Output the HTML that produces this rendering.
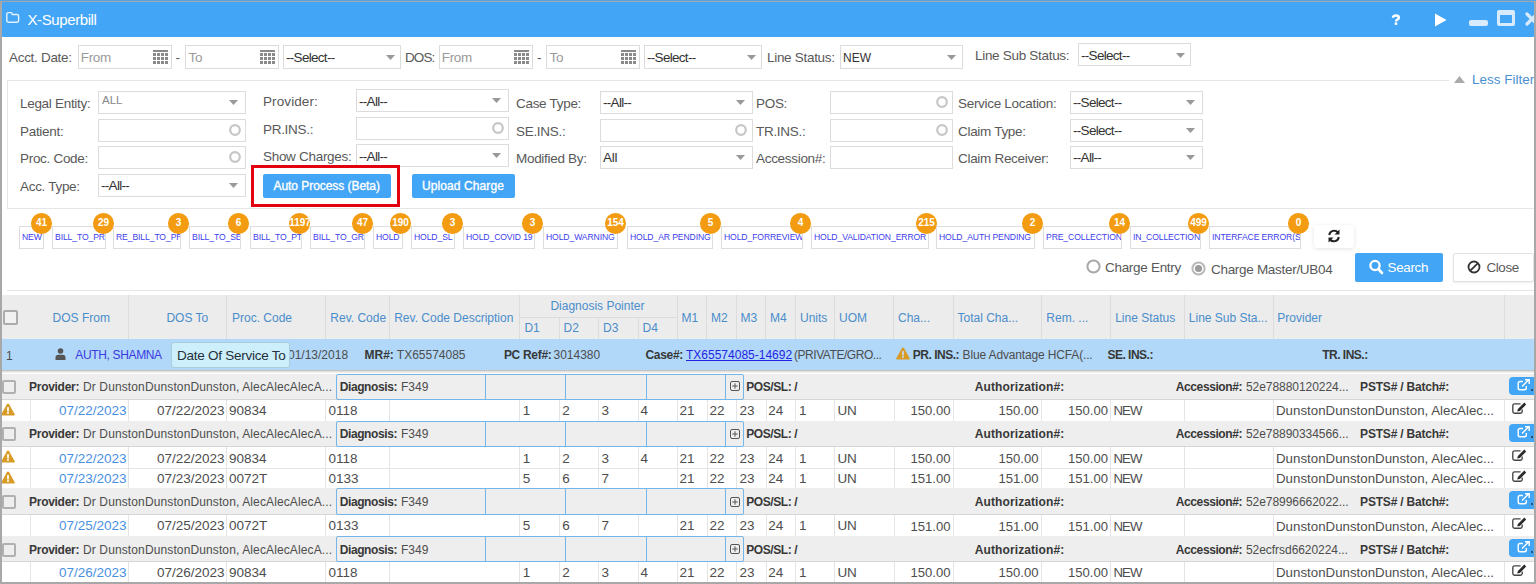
<!DOCTYPE html>
<html><head><meta charset="utf-8"><style>
html,body{margin:0;padding:0;width:1536px;height:584px;overflow:hidden;background:#fff}
body{position:relative;font-family:"Liberation Sans", sans-serif}
div,span,svg{position:absolute}
.t{white-space:nowrap;line-height:1;font-family:"Liberation Sans", sans-serif}
</style></head><body>
<div style="left:0px;top:0px;width:1536px;height:584px;background:#fff"></div>
<div style="left:0px;top:0px;width:1536px;height:1px;background:#52a3e6"></div>
<div style="left:0px;top:1px;width:1536px;height:1px;background:#a8a8a8"></div>
<div style="left:2px;top:2px;width:1532px;height:35px;background:#43a5f5"></div>
<svg style="position:absolute;left:0;top:0" width="24" height="28" viewBox="0 0 24 28"><path d="M6.8 14Q6.8 12.6 8.2 12.6H10.8Q11.6 12.6 12 13.4L12.4 14.4H17.2Q18.6 14.4 18.6 15.8V20.8Q18.6 22.2 17.2 22.2H8.2Q6.8 22.2 6.8 20.8Z" fill="none" stroke="#e2f1fd" stroke-width="1.45"/></svg>
<span class="t" style="left:27.5px;top:12.10px;font-size:15px;color:#fff;font-weight:400;letter-spacing:-0.4px">X-Superbill</span>
<svg style="position:absolute;left:1386px;top:10px" width="20" height="20" viewBox="1386 10 20 20"><path d="M1393 17.8Q1393 15.5 1396 15.5Q1398.8 15.5 1398.8 17.7Q1398.8 18.9 1397.4 19.6Q1396 20.3 1396 21.4" fill="none" stroke="#fff" stroke-width="2.5"/><rect x="1394.75" y="22.4" width="2.5" height="2.5" fill="#fff"/></svg>
<svg style="position:absolute;left:1434px;top:13px" width="13" height="14" viewBox="0 0 13 14"><path d="M1 0.5L12.5 7L1 13.5z" fill="#fff"/></svg>
<div style="left:1469px;top:20px;width:19px;height:6px;background:#d8ebfc;border-radius:2px"></div>
<div style="left:1497px;top:10.3px;width:18px;height:15.7px;box-sizing:border-box;border:3px solid #d8ebfc;border-top-width:5.3px;border-radius:2px"></div>
<svg style="position:absolute;left:1524.5px;top:12px" width="14" height="14" viewBox="0 0 14 14"><path d="M2 2L12 12M12 2L2 12" stroke="#d8ebfc" stroke-width="3.2" stroke-linecap="round"/></svg>
<span class="t" style="left:9px;top:51.07px;font-size:13.5px;color:#595959;font-weight:400;;letter-spacing:-0.3px">Acct. Date:</span>
<div style="left:78px;top:45px;width:94px;height:24px;box-sizing:border-box;border:1px solid #dcdcdc;background:#fff;"></div>
<span class="t" style="left:80.7px;top:50.57px;font-size:13.5px;color:#9a9a9a;font-weight:400;;letter-spacing:-0.3px">From</span>
<svg style="position:absolute;left:153px;top:50px" width="15" height="14" viewBox="0 0 15 14"><rect x="0" y="0" width="15" height="2" fill="#8a8a8a"/><rect x="0" y="3" width="3" height="3" fill="#8a8a8a"/><rect x="4" y="3" width="3" height="3" fill="#8a8a8a"/><rect x="8" y="3" width="3" height="3" fill="#8a8a8a"/><rect x="12" y="3" width="3" height="3" fill="#8a8a8a"/><rect x="0" y="7" width="3" height="3" fill="#8a8a8a"/><rect x="4" y="7" width="3" height="3" fill="#8a8a8a"/><rect x="8" y="7" width="3" height="3" fill="#8a8a8a"/><rect x="12" y="7" width="3" height="3" fill="#8a8a8a"/><rect x="0" y="11" width="3" height="3" fill="#8a8a8a"/><rect x="4" y="11" width="3" height="3" fill="#8a8a8a"/><rect x="8" y="11" width="3" height="3" fill="#8a8a8a"/><rect x="12" y="11" width="3" height="3" fill="#8a8a8a"/></svg>
<span class="t" style="left:175.5px;top:50.57px;font-size:13.5px;color:#595959;font-weight:400;;letter-spacing:-0.3px">-</span>
<div style="left:185px;top:45px;width:94px;height:24px;box-sizing:border-box;border:1px solid #dcdcdc;background:#fff;"></div>
<span class="t" style="left:188.5px;top:50.57px;font-size:13.5px;color:#9a9a9a;font-weight:400;;letter-spacing:-0.3px">To</span>
<svg style="position:absolute;left:260px;top:50px" width="15" height="14" viewBox="0 0 15 14"><rect x="0" y="0" width="15" height="2" fill="#8a8a8a"/><rect x="0" y="3" width="3" height="3" fill="#8a8a8a"/><rect x="4" y="3" width="3" height="3" fill="#8a8a8a"/><rect x="8" y="3" width="3" height="3" fill="#8a8a8a"/><rect x="12" y="3" width="3" height="3" fill="#8a8a8a"/><rect x="0" y="7" width="3" height="3" fill="#8a8a8a"/><rect x="4" y="7" width="3" height="3" fill="#8a8a8a"/><rect x="8" y="7" width="3" height="3" fill="#8a8a8a"/><rect x="12" y="7" width="3" height="3" fill="#8a8a8a"/><rect x="0" y="11" width="3" height="3" fill="#8a8a8a"/><rect x="4" y="11" width="3" height="3" fill="#8a8a8a"/><rect x="8" y="11" width="3" height="3" fill="#8a8a8a"/><rect x="12" y="11" width="3" height="3" fill="#8a8a8a"/></svg>
<div style="left:283px;top:45px;width:118px;height:24px;box-sizing:border-box;border:1px solid #dcdcdc;background:#fff;"></div>
<span class="t" style="left:286px;top:50.57px;font-size:13.5px;color:#333;font-weight:400;;letter-spacing:-0.7px">--Select--</span>
<svg style="position:absolute;left:386px;top:55px" width="9" height="5" viewBox="0 0 9 5"><path d="M0 0H9L4.5 5z" fill="#999"/></svg>
<span class="t" style="left:405px;top:51.07px;font-size:13.5px;color:#595959;font-weight:400;letter-spacing:-0.9px">DOS:</span>
<div style="left:439px;top:45px;width:94px;height:24px;box-sizing:border-box;border:1px solid #dcdcdc;background:#fff;"></div>
<span class="t" style="left:441.7px;top:50.57px;font-size:13.5px;color:#9a9a9a;font-weight:400;;letter-spacing:-0.3px">From</span>
<svg style="position:absolute;left:514px;top:50px" width="15" height="14" viewBox="0 0 15 14"><rect x="0" y="0" width="15" height="2" fill="#8a8a8a"/><rect x="0" y="3" width="3" height="3" fill="#8a8a8a"/><rect x="4" y="3" width="3" height="3" fill="#8a8a8a"/><rect x="8" y="3" width="3" height="3" fill="#8a8a8a"/><rect x="12" y="3" width="3" height="3" fill="#8a8a8a"/><rect x="0" y="7" width="3" height="3" fill="#8a8a8a"/><rect x="4" y="7" width="3" height="3" fill="#8a8a8a"/><rect x="8" y="7" width="3" height="3" fill="#8a8a8a"/><rect x="12" y="7" width="3" height="3" fill="#8a8a8a"/><rect x="0" y="11" width="3" height="3" fill="#8a8a8a"/><rect x="4" y="11" width="3" height="3" fill="#8a8a8a"/><rect x="8" y="11" width="3" height="3" fill="#8a8a8a"/><rect x="12" y="11" width="3" height="3" fill="#8a8a8a"/></svg>
<span class="t" style="left:537px;top:50.57px;font-size:13.5px;color:#595959;font-weight:400;;letter-spacing:-0.3px">-</span>
<div style="left:546px;top:45px;width:94px;height:24px;box-sizing:border-box;border:1px solid #dcdcdc;background:#fff;"></div>
<span class="t" style="left:549.5px;top:50.57px;font-size:13.5px;color:#9a9a9a;font-weight:400;;letter-spacing:-0.3px">To</span>
<svg style="position:absolute;left:621px;top:50px" width="15" height="14" viewBox="0 0 15 14"><rect x="0" y="0" width="15" height="2" fill="#8a8a8a"/><rect x="0" y="3" width="3" height="3" fill="#8a8a8a"/><rect x="4" y="3" width="3" height="3" fill="#8a8a8a"/><rect x="8" y="3" width="3" height="3" fill="#8a8a8a"/><rect x="12" y="3" width="3" height="3" fill="#8a8a8a"/><rect x="0" y="7" width="3" height="3" fill="#8a8a8a"/><rect x="4" y="7" width="3" height="3" fill="#8a8a8a"/><rect x="8" y="7" width="3" height="3" fill="#8a8a8a"/><rect x="12" y="7" width="3" height="3" fill="#8a8a8a"/><rect x="0" y="11" width="3" height="3" fill="#8a8a8a"/><rect x="4" y="11" width="3" height="3" fill="#8a8a8a"/><rect x="8" y="11" width="3" height="3" fill="#8a8a8a"/><rect x="12" y="11" width="3" height="3" fill="#8a8a8a"/></svg>
<div style="left:644px;top:45px;width:118px;height:24px;box-sizing:border-box;border:1px solid #dcdcdc;background:#fff;"></div>
<span class="t" style="left:647px;top:50.57px;font-size:13.5px;color:#333;font-weight:400;;letter-spacing:-0.7px">--Select--</span>
<svg style="position:absolute;left:747px;top:55px" width="9" height="5" viewBox="0 0 9 5"><path d="M0 0H9L4.5 5z" fill="#999"/></svg>
<span class="t" style="left:767px;top:51.07px;font-size:13.5px;color:#595959;font-weight:400;;letter-spacing:-0.3px">Line Status:</span>
<div style="left:840px;top:45px;width:123px;height:24px;box-sizing:border-box;border:1px solid #dcdcdc;background:#fff;"></div>
<span class="t" style="left:843px;top:51.84px;font-size:12px;color:#333;font-weight:400;">NEW</span>
<svg style="position:absolute;left:947px;top:55px" width="9" height="5" viewBox="0 0 9 5"><path d="M0 0H9L4.5 5z" fill="#999"/></svg>
<span class="t" style="left:975px;top:49.07px;font-size:13.5px;color:#595959;font-weight:400;;letter-spacing:-0.3px">Line Sub Status:</span>
<div style="left:1078px;top:43px;width:113px;height:23px;box-sizing:border-box;border:1px solid #dcdcdc;background:#fff;"></div>
<span class="t" style="left:1081px;top:48.57px;font-size:13.5px;color:#333;font-weight:400;;letter-spacing:-0.7px">--Select--</span>
<svg style="position:absolute;left:1176px;top:53px" width="9" height="5" viewBox="0 0 9 5"><path d="M0 0H9L4.5 5z" fill="#999"/></svg>
<div style="left:7px;top:80px;width:1442px;height:1px;background:#e6e6e6"></div>
<svg style="position:absolute;left:1454px;top:76px" width="11" height="7" viewBox="0 0 11 7"><path d="M0 7H11L5.5 0z" fill="#aaa"/></svg>
<span class="t" style="left:1472px;top:72.97px;font-size:13.5px;color:#4a90d0;font-weight:400;">Less Filter</span>
<div style="left:7px;top:80px;width:1px;height:129px;background:#e6e6e6"></div>
<div style="left:7px;top:208px;width:1527px;height:1px;background:#e6e6e6"></div>
<span class="t" style="left:20px;top:96.57px;font-size:13.5px;color:#595959;font-weight:400;;letter-spacing:-0.3px">Legal Entity:</span>
<div style="left:98px;top:91px;width:148px;height:23px;box-sizing:border-box;border:1px solid #dcdcdc;background:#fff;"></div>
<span class="t" style="left:102px;top:95.27px;font-size:11.5px;color:#888;font-weight:400;">ALL</span>
<svg style="position:absolute;left:229px;top:100px" width="9" height="5" viewBox="0 0 9 5"><path d="M0 0H9L4.5 5z" fill="#999"/></svg>
<span class="t" style="left:20px;top:124.57px;font-size:13.5px;color:#595959;font-weight:400;;letter-spacing:-0.3px">Patient:</span>
<div style="left:98px;top:119px;width:148px;height:23px;box-sizing:border-box;border:1px solid #dcdcdc;background:#fff;"></div>
<svg style="position:absolute;left:229px;top:124px" width="12" height="12" viewBox="0 0 12 12"><circle cx="6" cy="6" r="4.8" fill="none" stroke="#c6c6c6" stroke-width="2.2"/></svg>
<span class="t" style="left:20px;top:151.57px;font-size:13.5px;color:#595959;font-weight:400;;letter-spacing:-0.3px">Proc. Code:</span>
<div style="left:98px;top:146px;width:148px;height:23px;box-sizing:border-box;border:1px solid #dcdcdc;background:#fff;"></div>
<svg style="position:absolute;left:229px;top:151px" width="12" height="12" viewBox="0 0 12 12"><circle cx="6" cy="6" r="4.8" fill="none" stroke="#c6c6c6" stroke-width="2.2"/></svg>
<span class="t" style="left:20px;top:179.57px;font-size:13.5px;color:#595959;font-weight:400;;letter-spacing:-0.3px">Acc. Type:</span>
<div style="left:98px;top:174px;width:148px;height:23px;box-sizing:border-box;border:1px solid #dcdcdc;background:#fff;"></div>
<span class="t" style="left:101px;top:179.07px;font-size:13.5px;color:#333;font-weight:400;;letter-spacing:-0.7px">--All--</span>
<svg style="position:absolute;left:229px;top:183px" width="9" height="5" viewBox="0 0 9 5"><path d="M0 0H9L4.5 5z" fill="#999"/></svg>
<span class="t" style="left:263px;top:94.97px;font-size:13.5px;color:#595959;font-weight:400;letter-spacing:0.1px">Provider:</span>
<div style="left:356px;top:89px;width:153px;height:23px;box-sizing:border-box;border:1px solid #dcdcdc;background:#fff;"></div>
<span class="t" style="left:359px;top:94.57px;font-size:13.5px;color:#333;font-weight:400;;letter-spacing:-0.7px">--All--</span>
<svg style="position:absolute;left:492px;top:98px" width="9" height="5" viewBox="0 0 9 5"><path d="M0 0H9L4.5 5z" fill="#999"/></svg>
<span class="t" style="left:263px;top:122.57px;font-size:13.5px;color:#595959;font-weight:400;;letter-spacing:-0.3px">PR.INS.:</span>
<div style="left:356px;top:117px;width:153px;height:23px;box-sizing:border-box;border:1px solid #dcdcdc;background:#fff;"></div>
<svg style="position:absolute;left:492px;top:122px" width="12" height="12" viewBox="0 0 12 12"><circle cx="6" cy="6" r="4.8" fill="none" stroke="#c6c6c6" stroke-width="2.2"/></svg>
<span class="t" style="left:263px;top:150.07px;font-size:13.5px;color:#595959;font-weight:400;;letter-spacing:-0.3px">Show Charges:</span>
<div style="left:356px;top:144px;width:153px;height:23px;box-sizing:border-box;border:1px solid #dcdcdc;background:#fff;"></div>
<span class="t" style="left:359px;top:149.57px;font-size:13.5px;color:#333;font-weight:400;;letter-spacing:-0.7px">--All--</span>
<svg style="position:absolute;left:492px;top:153px" width="9" height="5" viewBox="0 0 9 5"><path d="M0 0H9L4.5 5z" fill="#999"/></svg>
<span class="t" style="left:516px;top:96.57px;font-size:13.5px;color:#595959;font-weight:400;;letter-spacing:-0.3px">Case Type:</span>
<div style="left:600px;top:91px;width:153px;height:23px;box-sizing:border-box;border:1px solid #dcdcdc;background:#fff;"></div>
<span class="t" style="left:603px;top:96.07px;font-size:13.5px;color:#333;font-weight:400;;letter-spacing:-0.7px">--All--</span>
<svg style="position:absolute;left:736px;top:100px" width="9" height="5" viewBox="0 0 9 5"><path d="M0 0H9L4.5 5z" fill="#999"/></svg>
<span class="t" style="left:516px;top:124.57px;font-size:13.5px;color:#595959;font-weight:400;;letter-spacing:-0.3px">SE.INS.:</span>
<div style="left:600px;top:119px;width:153px;height:23px;box-sizing:border-box;border:1px solid #dcdcdc;background:#fff;"></div>
<svg style="position:absolute;left:735px;top:124px" width="12" height="12" viewBox="0 0 12 12"><circle cx="6" cy="6" r="4.8" fill="none" stroke="#c6c6c6" stroke-width="2.2"/></svg>
<span class="t" style="left:516px;top:151.57px;font-size:13.5px;color:#595959;font-weight:400;;letter-spacing:-0.3px">Modified By:</span>
<div style="left:600px;top:146px;width:153px;height:23px;box-sizing:border-box;border:1px solid #dcdcdc;background:#fff;"></div>
<span class="t" style="left:603px;top:151.07px;font-size:13.5px;color:#333;font-weight:400;;letter-spacing:-0.3px">All</span>
<svg style="position:absolute;left:736px;top:155px" width="9" height="5" viewBox="0 0 9 5"><path d="M0 0H9L4.5 5z" fill="#999"/></svg>
<span class="t" style="left:756px;top:96.57px;font-size:13.5px;color:#595959;font-weight:400;;letter-spacing:-0.3px">POS:</span>
<div style="left:830px;top:91px;width:123px;height:23px;box-sizing:border-box;border:1px solid #dcdcdc;background:#fff;"></div>
<svg style="position:absolute;left:936px;top:96px" width="12" height="12" viewBox="0 0 12 12"><circle cx="6" cy="6" r="4.8" fill="none" stroke="#c6c6c6" stroke-width="2.2"/></svg>
<span class="t" style="left:756px;top:124.57px;font-size:13.5px;color:#595959;font-weight:400;;letter-spacing:-0.3px">TR.INS.:</span>
<div style="left:830px;top:119px;width:123px;height:23px;box-sizing:border-box;border:1px solid #dcdcdc;background:#fff;"></div>
<svg style="position:absolute;left:936px;top:124px" width="12" height="12" viewBox="0 0 12 12"><circle cx="6" cy="6" r="4.8" fill="none" stroke="#c6c6c6" stroke-width="2.2"/></svg>
<span class="t" style="left:756px;top:151.57px;font-size:13.5px;color:#595959;font-weight:400;;letter-spacing:-0.3px">Accession#:</span>
<div style="left:830px;top:146px;width:123px;height:23px;box-sizing:border-box;border:1px solid #dcdcdc;background:#fff;"></div>
<span class="t" style="left:958px;top:96.57px;font-size:13.5px;color:#595959;font-weight:400;;letter-spacing:-0.3px">Service Location:</span>
<div style="left:1070px;top:91px;width:133px;height:23px;box-sizing:border-box;border:1px solid #dcdcdc;background:#fff;"></div>
<span class="t" style="left:1073px;top:96.07px;font-size:13.5px;color:#333;font-weight:400;;letter-spacing:-0.7px">--Select--</span>
<svg style="position:absolute;left:1186px;top:100px" width="9" height="5" viewBox="0 0 9 5"><path d="M0 0H9L4.5 5z" fill="#999"/></svg>
<span class="t" style="left:958px;top:124.57px;font-size:13.5px;color:#595959;font-weight:400;;letter-spacing:-0.3px">Claim Type:</span>
<div style="left:1070px;top:119px;width:133px;height:23px;box-sizing:border-box;border:1px solid #dcdcdc;background:#fff;"></div>
<span class="t" style="left:1073px;top:124.07px;font-size:13.5px;color:#333;font-weight:400;;letter-spacing:-0.7px">--Select--</span>
<svg style="position:absolute;left:1186px;top:128px" width="9" height="5" viewBox="0 0 9 5"><path d="M0 0H9L4.5 5z" fill="#999"/></svg>
<span class="t" style="left:958px;top:151.57px;font-size:13.5px;color:#595959;font-weight:400;;letter-spacing:-0.3px">Claim Receiver:</span>
<div style="left:1070px;top:146px;width:133px;height:23px;box-sizing:border-box;border:1px solid #dcdcdc;background:#fff;"></div>
<span class="t" style="left:1073px;top:151.07px;font-size:13.5px;color:#333;font-weight:400;;letter-spacing:-0.7px">--All--</span>
<svg style="position:absolute;left:1186px;top:155px" width="9" height="5" viewBox="0 0 9 5"><path d="M0 0H9L4.5 5z" fill="#999"/></svg>
<div style="left:251px;top:165px;width:149px;height:42px;box-sizing:border-box;border:3px solid #e3000f"></div>
<div style="left:263px;top:174px;width:128px;height:24px;background:#43a5f5;border-radius:2px"></div>
<span class="t" style="left:273.5px;top:180.14px;font-size:12px;color:#fff;font-weight:400;-webkit-text-stroke:0.35px #fff;letter-spacing:-0.05px">Auto Process (Beta)</span>
<div style="left:412px;top:174px;width:103px;height:24px;background:#43a5f5;border-radius:2px"></div>
<span class="t" style="left:422px;top:180.14px;font-size:12px;color:#fff;font-weight:400;-webkit-text-stroke:0.35px #fff;letter-spacing:0.1px">Upload Charge</span>
<div style="left:19px;top:226px;width:25px;height:23px;box-sizing:border-box;border:1px solid #dddddd;overflow:hidden;background:#fff"><span class="t" style="left:2px;top:6px;font-size:8.6px;color:#4040ec;letter-spacing:-0.1px">NEW</span></div>
<div style="left:31.2px;top:213px;width:20.6px;height:20.6px;border-radius:50%;background:#f39c12;overflow:hidden"><span class="t" style="left:0;width:100%;text-align:center;top:4.5px;font-size:10px;color:#fff;font-weight:700;letter-spacing:0px">41</span></div>
<div style="left:52px;top:226px;width:54px;height:23px;box-sizing:border-box;border:1px solid #dddddd;overflow:hidden;background:#fff"><span class="t" style="left:2px;top:6px;font-size:8.6px;color:#4040ec;letter-spacing:-0.1px">BILL_TO_PR</span></div>
<div style="left:93.2px;top:213px;width:20.6px;height:20.6px;border-radius:50%;background:#f39c12;overflow:hidden"><span class="t" style="left:0;width:100%;text-align:center;top:4.5px;font-size:10px;color:#fff;font-weight:700;letter-spacing:0px">29</span></div>
<div style="left:113px;top:226px;width:68px;height:23px;box-sizing:border-box;border:1px solid #dddddd;overflow:hidden;background:#fff"><span class="t" style="left:2px;top:6px;font-size:8.6px;color:#4040ec;letter-spacing:-0.1px">RE_BILL_TO_PR</span></div>
<div style="left:168.2px;top:213px;width:20.6px;height:20.6px;border-radius:50%;background:#f39c12;overflow:hidden"><span class="t" style="left:0;width:100%;text-align:center;top:4.5px;font-size:10px;color:#fff;font-weight:700;letter-spacing:0px">3</span></div>
<div style="left:189px;top:226px;width:52px;height:23px;box-sizing:border-box;border:1px solid #dddddd;overflow:hidden;background:#fff"><span class="t" style="left:2px;top:6px;font-size:8.6px;color:#4040ec;letter-spacing:-0.1px">BILL_TO_SE</span></div>
<div style="left:228.2px;top:213px;width:20.6px;height:20.6px;border-radius:50%;background:#f39c12;overflow:hidden"><span class="t" style="left:0;width:100%;text-align:center;top:4.5px;font-size:10px;color:#fff;font-weight:700;letter-spacing:0px">6</span></div>
<div style="left:250px;top:226px;width:52px;height:23px;box-sizing:border-box;border:1px solid #dddddd;overflow:hidden;background:#fff"><span class="t" style="left:2px;top:6px;font-size:8.6px;color:#4040ec;letter-spacing:-0.1px">BILL_TO_PT</span></div>
<div style="left:289.2px;top:213px;width:20.6px;height:20.6px;border-radius:50%;background:#f39c12;overflow:hidden"><span class="t" style="left:0;width:100%;text-align:center;top:4.5px;font-size:10px;color:#fff;font-weight:700;letter-spacing:0px">1197</span></div>
<div style="left:310px;top:226px;width:55px;height:23px;box-sizing:border-box;border:1px solid #dddddd;overflow:hidden;background:#fff"><span class="t" style="left:2px;top:6px;font-size:8.6px;color:#4040ec;letter-spacing:-0.1px">BILL_TO_GR</span></div>
<div style="left:352.2px;top:213px;width:20.6px;height:20.6px;border-radius:50%;background:#f39c12;overflow:hidden"><span class="t" style="left:0;width:100%;text-align:center;top:4.5px;font-size:10px;color:#fff;font-weight:700;letter-spacing:0px">47</span></div>
<div style="left:373px;top:226px;width:30px;height:23px;box-sizing:border-box;border:1px solid #dddddd;overflow:hidden;background:#fff"><span class="t" style="left:2px;top:6px;font-size:8.6px;color:#4040ec;letter-spacing:-0.1px">HOLD</span></div>
<div style="left:390.2px;top:213px;width:20.6px;height:20.6px;border-radius:50%;background:#f39c12;overflow:hidden"><span class="t" style="left:0;width:100%;text-align:center;top:4.5px;font-size:10px;color:#fff;font-weight:700;letter-spacing:0px">190</span></div>
<div style="left:411px;top:226px;width:44px;height:23px;box-sizing:border-box;border:1px solid #dddddd;overflow:hidden;background:#fff"><span class="t" style="left:2px;top:6px;font-size:8.6px;color:#4040ec;letter-spacing:-0.1px">HOLD_SL</span></div>
<div style="left:442.2px;top:213px;width:20.6px;height:20.6px;border-radius:50%;background:#f39c12;overflow:hidden"><span class="t" style="left:0;width:100%;text-align:center;top:4.5px;font-size:10px;color:#fff;font-weight:700;letter-spacing:0px">3</span></div>
<div style="left:463px;top:226px;width:72px;height:23px;box-sizing:border-box;border:1px solid #dddddd;overflow:hidden;background:#fff"><span class="t" style="left:2px;top:6px;font-size:8.6px;color:#4040ec;letter-spacing:-0.1px">HOLD_COVID 19</span></div>
<div style="left:522.2px;top:213px;width:20.6px;height:20.6px;border-radius:50%;background:#f39c12;overflow:hidden"><span class="t" style="left:0;width:100%;text-align:center;top:4.5px;font-size:10px;color:#fff;font-weight:700;letter-spacing:0px">3</span></div>
<div style="left:543px;top:226px;width:75px;height:23px;box-sizing:border-box;border:1px solid #dddddd;overflow:hidden;background:#fff"><span class="t" style="left:2px;top:6px;font-size:8.6px;color:#4040ec;letter-spacing:-0.1px">HOLD_WARNING</span></div>
<div style="left:605.2px;top:213px;width:20.6px;height:20.6px;border-radius:50%;background:#f39c12;overflow:hidden"><span class="t" style="left:0;width:100%;text-align:center;top:4.5px;font-size:10px;color:#fff;font-weight:700;letter-spacing:0px">154</span></div>
<div style="left:627px;top:226px;width:86px;height:23px;box-sizing:border-box;border:1px solid #dddddd;overflow:hidden;background:#fff"><span class="t" style="left:2px;top:6px;font-size:8.6px;color:#4040ec;letter-spacing:-0.1px">HOLD_AR PENDING</span></div>
<div style="left:700.2px;top:213px;width:20.6px;height:20.6px;border-radius:50%;background:#f39c12;overflow:hidden"><span class="t" style="left:0;width:100%;text-align:center;top:4.5px;font-size:10px;color:#fff;font-weight:700;letter-spacing:0px">5</span></div>
<div style="left:721px;top:226px;width:82px;height:23px;box-sizing:border-box;border:1px solid #dddddd;overflow:hidden;background:#fff"><span class="t" style="left:2px;top:6px;font-size:8.6px;color:#4040ec;letter-spacing:-0.1px">HOLD_FORREVIEW</span></div>
<div style="left:790.2px;top:213px;width:20.6px;height:20.6px;border-radius:50%;background:#f39c12;overflow:hidden"><span class="t" style="left:0;width:100%;text-align:center;top:4.5px;font-size:10px;color:#fff;font-weight:700;letter-spacing:0px">4</span></div>
<div style="left:811px;top:226px;width:118px;height:23px;box-sizing:border-box;border:1px solid #dddddd;overflow:hidden;background:#fff"><span class="t" style="left:2px;top:6px;font-size:8.6px;color:#4040ec;letter-spacing:-0.1px">HOLD_VALIDATION_ERROR</span></div>
<div style="left:916.2px;top:213px;width:20.6px;height:20.6px;border-radius:50%;background:#f39c12;overflow:hidden"><span class="t" style="left:0;width:100%;text-align:center;top:4.5px;font-size:10px;color:#fff;font-weight:700;letter-spacing:0px">215</span></div>
<div style="left:936px;top:226px;width:99px;height:23px;box-sizing:border-box;border:1px solid #dddddd;overflow:hidden;background:#fff"><span class="t" style="left:2px;top:6px;font-size:8.6px;color:#4040ec;letter-spacing:-0.1px">HOLD_AUTH PENDING</span></div>
<div style="left:1022.2px;top:213px;width:20.6px;height:20.6px;border-radius:50%;background:#f39c12;overflow:hidden"><span class="t" style="left:0;width:100%;text-align:center;top:4.5px;font-size:10px;color:#fff;font-weight:700;letter-spacing:0px">2</span></div>
<div style="left:1043px;top:226px;width:79px;height:23px;box-sizing:border-box;border:1px solid #dddddd;overflow:hidden;background:#fff"><span class="t" style="left:2px;top:6px;font-size:8.6px;color:#4040ec;letter-spacing:-0.1px">PRE_COLLECTION</span></div>
<div style="left:1109.2px;top:213px;width:20.6px;height:20.6px;border-radius:50%;background:#f39c12;overflow:hidden"><span class="t" style="left:0;width:100%;text-align:center;top:4.5px;font-size:10px;color:#fff;font-weight:700;letter-spacing:0px">14</span></div>
<div style="left:1130px;top:226px;width:71px;height:23px;box-sizing:border-box;border:1px solid #dddddd;overflow:hidden;background:#fff"><span class="t" style="left:2px;top:6px;font-size:8.6px;color:#4040ec;letter-spacing:-0.1px">IN_COLLECTION</span></div>
<div style="left:1188.2px;top:213px;width:20.6px;height:20.6px;border-radius:50%;background:#f39c12;overflow:hidden"><span class="t" style="left:0;width:100%;text-align:center;top:4.5px;font-size:10px;color:#fff;font-weight:700;letter-spacing:0px">499</span></div>
<div style="left:1209px;top:226px;width:92px;height:23px;box-sizing:border-box;border:1px solid #dddddd;overflow:hidden;background:#fff"><span class="t" style="left:2px;top:6px;font-size:8.6px;color:#4040ec;letter-spacing:-0.1px">INTERFACE ERROR(S)</span></div>
<div style="left:1288.2px;top:213px;width:20.6px;height:20.6px;border-radius:50%;background:#f39c12;overflow:hidden"><span class="t" style="left:0;width:100%;text-align:center;top:4.5px;font-size:10px;color:#fff;font-weight:700;letter-spacing:0px">0</span></div>
<div style="left:1314px;top:225px;width:40px;height:23px;background:#fff;box-shadow:0 1px 4px rgba(0,0,0,0.11);border-radius:3px"></div>
<svg style="position:absolute;left:1327px;top:229px" width="14" height="14" viewBox="0 0 14 14"><path d="M2.2 6A5 5 0 0 1 11 3.5M11.8 8A5 5 0 0 1 3 10.5" fill="none" stroke="#222" stroke-width="2"/><path d="M12.5 0.5V5.5H7.5z M1.5 13.5V8.5H6.5z" fill="#222"/></svg>
<svg style="position:absolute;left:1086px;top:259px" width="15" height="15" viewBox="0 0 15 15"><circle cx="7.5" cy="7.5" r="6.1" fill="#fff" stroke="#a8a8a8" stroke-width="2"/></svg>
<span class="t" style="left:1105px;top:260.57px;font-size:13.5px;color:#595959;font-weight:400;;letter-spacing:-0.3px">Charge Entry</span>
<svg style="position:absolute;left:1191px;top:261px" width="15" height="15" viewBox="0 0 15 15"><circle cx="7.5" cy="7.5" r="6.1" fill="#fff" stroke="#b8b8b8" stroke-width="2"/><circle cx="7.5" cy="7.5" r="3.6" fill="#9c9c9c"/></svg>
<span class="t" style="left:1211px;top:262.57px;font-size:13.5px;color:#595959;font-weight:400;;letter-spacing:-0.3px">Charge Master/UB04</span>
<div style="left:1354.5px;top:252.5px;width:88.5px;height:29.5px;background:#43a5f5;border-radius:2px"></div>
<svg style="position:absolute;left:1369px;top:259px" width="15" height="16" viewBox="0 0 15 16"><circle cx="6" cy="6.5" r="4.6" fill="none" stroke="#fff" stroke-width="2.3"/><path d="M9.3 10L13 14" stroke="#fff" stroke-width="2.6" stroke-linecap="round"/></svg>
<span class="t" style="left:1387.5px;top:261.16px;font-size:13.4px;color:#fff;font-weight:400;letter-spacing:-0.3px">Search</span>
<div style="left:1453px;top:252.5px;width:81px;height:29.5px;box-sizing:border-box;background:#fff;border:1px solid #e2e2e2;border-radius:2px;box-shadow:0 1px 2px rgba(0,0,0,0.08)"></div>
<svg style="position:absolute;left:1467px;top:260px" width="14" height="14" viewBox="0 0 14 14"><circle cx="7" cy="7" r="5.5" fill="none" stroke="#333" stroke-width="1.8"/><path d="M3.3 10.7L10.7 3.3" stroke="#333" stroke-width="1.8"/></svg>
<span class="t" style="left:1486.5px;top:261.16px;font-size:13.4px;color:#5a5a5a;font-weight:400;letter-spacing:-0.4px">Close</span>
<div style="left:7px;top:290px;width:1527px;height:1px;background:#e6e6e6"></div>
<div style="left:2px;top:295px;width:1532px;height:44px;background:#ececec"></div>
<div style="left:128px;top:295px;width:1px;height:44px;background:#dcdcdc"></div>
<div style="left:226px;top:295px;width:1px;height:44px;background:#dcdcdc"></div>
<div style="left:325px;top:295px;width:1px;height:44px;background:#dcdcdc"></div>
<div style="left:389px;top:295px;width:1px;height:44px;background:#dcdcdc"></div>
<div style="left:519px;top:295px;width:1px;height:44px;background:#dcdcdc"></div>
<div style="left:677px;top:295px;width:1px;height:44px;background:#dcdcdc"></div>
<div style="left:706px;top:295px;width:1px;height:44px;background:#dcdcdc"></div>
<div style="left:736px;top:295px;width:1px;height:44px;background:#dcdcdc"></div>
<div style="left:765px;top:295px;width:1px;height:44px;background:#dcdcdc"></div>
<div style="left:795px;top:295px;width:1px;height:44px;background:#dcdcdc"></div>
<div style="left:834px;top:295px;width:1px;height:44px;background:#dcdcdc"></div>
<div style="left:893px;top:295px;width:1px;height:44px;background:#dcdcdc"></div>
<div style="left:953px;top:295px;width:1px;height:44px;background:#dcdcdc"></div>
<div style="left:1041px;top:295px;width:1px;height:44px;background:#dcdcdc"></div>
<div style="left:1110px;top:295px;width:1px;height:44px;background:#dcdcdc"></div>
<div style="left:1184px;top:295px;width:1px;height:44px;background:#dcdcdc"></div>
<div style="left:1273px;top:295px;width:1px;height:44px;background:#dcdcdc"></div>
<div style="left:1504px;top:295px;width:1px;height:44px;background:#dcdcdc"></div>
<div style="left:520px;top:317px;width:157px;height:1px;background:#dcdcdc"></div>
<div style="left:559px;top:318px;width:1px;height:21px;background:#dcdcdc"></div>
<div style="left:598px;top:318px;width:1px;height:21px;background:#dcdcdc"></div>
<div style="left:638px;top:318px;width:1px;height:21px;background:#dcdcdc"></div>
<div style="left:3px;top:310px;width:15px;height:15px;box-sizing:border-box;border:2px solid #ababab;border-radius:2px;background:#f1f1f1"></div>
<span class="t" style="left:52.6px;top:312.24px;font-size:12px;color:#4a8dcb;font-weight:400;">DOS From</span>
<span class="t" style="left:166.4px;top:312.24px;font-size:12px;color:#4a8dcb;font-weight:400;">DOS To</span>
<span class="t" style="left:232px;top:312.24px;font-size:12px;color:#4a8dcb;font-weight:400;">Proc. Code</span>
<span class="t" style="left:330.3px;top:312.24px;font-size:12px;color:#4a8dcb;font-weight:400;">Rev. Code</span>
<span class="t" style="left:394.2px;top:312.24px;font-size:12px;color:#4a8dcb;font-weight:400;">Rev. Code Description</span>
<span class="t" style="left:550.4px;top:299.94px;font-size:12px;color:#4a8dcb;font-weight:400;">Diagnosis Pointer</span>
<span class="t" style="left:524.4px;top:321.84px;font-size:12px;color:#4a8dcb;font-weight:400;">D1</span>
<span class="t" style="left:563.5px;top:321.84px;font-size:12px;color:#4a8dcb;font-weight:400;">D2</span>
<span class="t" style="left:603px;top:321.84px;font-size:12px;color:#4a8dcb;font-weight:400;">D3</span>
<span class="t" style="left:642.5px;top:321.84px;font-size:12px;color:#4a8dcb;font-weight:400;">D4</span>
<span class="t" style="left:681.6px;top:312.24px;font-size:12px;color:#4a8dcb;font-weight:400;">M1</span>
<span class="t" style="left:711px;top:312.24px;font-size:12px;color:#4a8dcb;font-weight:400;">M2</span>
<span class="t" style="left:740.5px;top:312.24px;font-size:12px;color:#4a8dcb;font-weight:400;">M3</span>
<span class="t" style="left:770px;top:312.24px;font-size:12px;color:#4a8dcb;font-weight:400;">M4</span>
<span class="t" style="left:800px;top:312.24px;font-size:12px;color:#4a8dcb;font-weight:400;">Units</span>
<span class="t" style="left:839px;top:312.24px;font-size:12px;color:#4a8dcb;font-weight:400;">UOM</span>
<span class="t" style="left:898px;top:312.24px;font-size:12px;color:#4a8dcb;font-weight:400;">Cha...</span>
<span class="t" style="left:957.5px;top:312.24px;font-size:12px;color:#4a8dcb;font-weight:400;">Total Cha...</span>
<span class="t" style="left:1046.3px;top:312.24px;font-size:12px;color:#4a8dcb;font-weight:400;">Rem. ...</span>
<span class="t" style="left:1115.2px;top:312.24px;font-size:12px;color:#4a8dcb;font-weight:400;">Line Status</span>
<span class="t" style="left:1188.8px;top:312.24px;font-size:12px;color:#4a8dcb;font-weight:400;">Line Sub Sta...</span>
<span class="t" style="left:1277.3px;top:312.24px;font-size:12px;color:#4a8dcb;font-weight:400;">Provider</span>
<div style="left:2px;top:339px;width:1532px;height:31px;background:#b1d8f9"></div>
<div style="left:2px;top:370px;width:1532px;height:1px;background:#c5c2be"></div>
<div style="left:2px;top:371px;width:1532px;height:2px;background:linear-gradient(#dadada,#f5f5f5)"></div>
<span class="t" style="left:6px;top:350.34px;font-size:12px;color:#4d4d4d;font-weight:400;">1</span>
<svg style="position:absolute;left:55px;top:348px" width="11" height="12" viewBox="0 0 11 12"><circle cx="5.5" cy="3" r="2.8" fill="#555"/><path d="M0.5 12V9.5Q0.5 6.8 3.5 6.8H7.5Q10.5 6.8 10.5 9.5V12z" fill="#555"/></svg>
<span class="t" style="left:75.3px;top:349.34px;font-size:12px;color:#3a3ade;font-weight:400;letter-spacing:-0.35px">AUTH, SHAMNA</span>
<span class="t" style="left:288px;top:349.34px;font-size:12px;color:#4d4d4d;font-weight:400;">01/13/2018</span>
<span class="t" style="left:364.5px;top:349.34px;font-size:12px;color:#383838;font-weight:700;">MR#:</span>
<span class="t" style="left:396.8px;top:349.34px;font-size:12px;color:#4d4d4d;font-weight:400;">TX65574085</span>
<span class="t" style="left:503.9px;top:349.34px;font-size:12px;color:#383838;font-weight:700;letter-spacing:-0.3px">PC Ref#:</span>
<span class="t" style="left:553.5px;top:349.34px;font-size:12px;color:#4d4d4d;font-weight:400;">3014380</span>
<span class="t" style="left:645.5px;top:349.34px;font-size:12px;color:#383838;font-weight:700;letter-spacing:-0.3px">Case#:</span>
<span class="t" style="left:686px;top:349.34px;font-size:12px;color:#2424e6;font-weight:400;text-decoration:underline">TX65574085-14692</span>
<span class="t" style="left:794px;top:349.34px;font-size:12px;color:#4d4d4d;font-weight:400;letter-spacing:-0.45px">(PRIVATE/GRO...</span>
<svg style="position:absolute;left:895.5px;top:347px" width="14" height="13" viewBox="0 0 14 13"><path d="M7 0.6Q7.7 0.6 8.1 1.3L13.7 11.2Q14.2 12.4 12.9 12.4H1.1Q-0.2 12.4 0.3 11.2L5.9 1.3Q6.3 0.6 7 0.6Z" fill="#d89b26"/><rect x="6.1" y="3.9" width="1.8" height="4.6" rx="0.6" fill="#c4dcf0"/><circle cx="7" cy="10.1" r="1" fill="#c4dcf0"/></svg>
<span class="t" style="left:912.8px;top:349.34px;font-size:12px;color:#383838;font-weight:700;letter-spacing:-0.5px">PR. INS.:</span>
<span class="t" style="left:962.6px;top:349.34px;font-size:12px;color:#4d4d4d;font-weight:400;letter-spacing:-0.15px">Blue Advantage HCFA(...</span>
<span class="t" style="left:1107.4px;top:349.34px;font-size:12px;color:#383838;font-weight:700;letter-spacing:-0.5px">SE. INS.:</span>
<span class="t" style="left:1322.2px;top:349.34px;font-size:12px;color:#383838;font-weight:700;letter-spacing:-0.5px">TR. INS.:</span>
<div style="left:171px;top:342px;width:119px;height:26px;box-sizing:border-box;background:#cdeffb;border:1px solid #a9cdd9;border-radius:3px"></div>
<span class="t" style="left:177px;top:349.37px;font-size:13.5px;color:#25303a;font-weight:400;letter-spacing:-0.25px">Date Of Service To</span>
<div style="left:2px;top:374px;width:1532px;height:25px;background:#eeeeee"></div>
<div style="left:2px;top:399px;width:1532px;height:1px;background:#d6d6d6"></div>
<div style="left:2px;top:379.8px;width:14px;height:14px;box-sizing:border-box;border:2px solid #b0b0b0;border-radius:2px;background:#eeeeee"></div>
<span class="t" style="left:29.1px;top:380.64px;font-size:12px;color:#383838;font-weight:700;letter-spacing:-0.3px">Provider:</span>
<span class="t" style="left:83px;top:380.64px;font-size:12px;color:#4d4d4d;font-weight:400;letter-spacing:0.12px">Dr DunstonDunstonDunston, AlecAlecAlecA...</span>
<div style="left:336px;top:374px;width:408px;height:26px;box-sizing:border-box;border:1.5px solid #74b5ec;border-radius:2px"></div>
<div style="left:485px;top:374px;width:1.2px;height:26px;background:#74b5ec"></div>
<div style="left:565px;top:374px;width:1.2px;height:26px;background:#74b5ec"></div>
<div style="left:646px;top:374px;width:1.2px;height:26px;background:#74b5ec"></div>
<div style="left:725px;top:374px;width:1.2px;height:26px;background:#74b5ec"></div>
<span class="t" style="left:339.7px;top:380.64px;font-size:12px;color:#383838;font-weight:700;letter-spacing:-0.4px">Diagnosis:</span>
<span class="t" style="left:401px;top:380.64px;font-size:12px;color:#4d4d4d;font-weight:400;">F349</span>
<svg style="position:absolute;left:729.5px;top:381.2px" width="10" height="10" viewBox="0 0 10 10"><rect x="0.5" y="0.5" width="9" height="9" rx="1.5" fill="none" stroke="#555" stroke-width="1"/><path d="M5 2.3V7.7M2.3 5H7.7" stroke="#555" stroke-width="1"/></svg>
<span class="t" style="left:746.2px;top:380.64px;font-size:12px;color:#383838;font-weight:700;letter-spacing:-0.4px">POS/SL: /</span>
<span class="t" style="left:974.8px;top:380.64px;font-size:12px;color:#383838;font-weight:700;letter-spacing:0.1px">Authorization#:</span>
<span class="t" style="left:1175.8px;top:380.64px;font-size:12px;color:#383838;font-weight:700;letter-spacing:-0.4px">Accession#:</span>
<span class="t" style="left:1246px;top:380.64px;font-size:12px;color:#4d4d4d;font-weight:400;letter-spacing:-0.05px">52e78880120224...</span>
<span class="t" style="left:1360.1px;top:380.64px;font-size:12px;color:#383838;font-weight:700;letter-spacing:-0.2px">PSTS# / Batch#:</span>
<div style="left:1509px;top:377px;width:30px;height:18px;background:#43a5f5;border-radius:4px"></div>
<div style="left:1531px;top:389px;width:1.8px;height:1.8px;background:#333;border-radius:1px"></div>
<svg style="position:absolute;left:1517.3px;top:379.3px" width="14" height="12" viewBox="0 0 14 12"><path d="M6 2.5H3Q1.2 2.5 1.2 4.3V9Q1.2 10.8 3 10.8H7.5Q9.3 10.8 9.3 9V7" fill="none" stroke="#fff" stroke-width="1.4"/><path d="M5 7.5L11.5 1M8 0.8H12.2V5" fill="none" stroke="#fff" stroke-width="1.4"/></svg>
<div style="left:30px;top:400px;width:1px;height:21px;background:#e4e4e4"></div>
<div style="left:128px;top:400px;width:1px;height:21px;background:#e4e4e4"></div>
<div style="left:226px;top:400px;width:1px;height:21px;background:#e4e4e4"></div>
<div style="left:325px;top:400px;width:1px;height:21px;background:#e4e4e4"></div>
<div style="left:389px;top:400px;width:1px;height:21px;background:#e4e4e4"></div>
<div style="left:519px;top:400px;width:1px;height:21px;background:#e4e4e4"></div>
<div style="left:559px;top:400px;width:1px;height:21px;background:#e4e4e4"></div>
<div style="left:598px;top:400px;width:1px;height:21px;background:#e4e4e4"></div>
<div style="left:638px;top:400px;width:1px;height:21px;background:#e4e4e4"></div>
<div style="left:677px;top:400px;width:1px;height:21px;background:#e4e4e4"></div>
<div style="left:707px;top:400px;width:1px;height:21px;background:#e4e4e4"></div>
<div style="left:736px;top:400px;width:1px;height:21px;background:#e4e4e4"></div>
<div style="left:766px;top:400px;width:1px;height:21px;background:#e4e4e4"></div>
<div style="left:795px;top:400px;width:1px;height:21px;background:#e4e4e4"></div>
<div style="left:834px;top:400px;width:1px;height:21px;background:#e4e4e4"></div>
<div style="left:894px;top:400px;width:1px;height:21px;background:#e4e4e4"></div>
<div style="left:953px;top:400px;width:1px;height:21px;background:#e4e4e4"></div>
<div style="left:1041px;top:400px;width:1px;height:21px;background:#e4e4e4"></div>
<div style="left:1110px;top:400px;width:1px;height:21px;background:#e4e4e4"></div>
<div style="left:1184px;top:400px;width:1px;height:21px;background:#e4e4e4"></div>
<div style="left:1273px;top:400px;width:1px;height:21px;background:#e4e4e4"></div>
<div style="left:1504px;top:400px;width:1px;height:21px;background:#e4e4e4"></div>
<svg style="position:absolute;left:1px;top:403px" width="14" height="13" viewBox="0 0 14 13"><path d="M7 0.6Q7.7 0.6 8.1 1.3L13.7 11.2Q14.2 12.4 12.9 12.4H1.1Q-0.2 12.4 0.3 11.2L5.9 1.3Q6.3 0.6 7 0.6Z" fill="#d89b26"/><rect x="6.1" y="3.9" width="1.8" height="4.6" rx="0.6" fill="#fff"/><circle cx="7" cy="10.1" r="1" fill="#fff"/></svg>
<span class="t" style="right:1409.5px;top:403.77px;font-size:13.5px;color:#4a90e2;font-weight:400;">07/22/2023</span>
<span class="t" style="right:1311.5px;top:403.77px;font-size:13.5px;color:#4d4d4d;font-weight:400;">07/22/2023</span>
<span class="t" style="left:229px;top:403.77px;font-size:13.5px;color:#4d4d4d;font-weight:400;">90834</span>
<span class="t" style="left:328.4px;top:403.77px;font-size:13.5px;color:#4d4d4d;font-weight:400;">0118</span>
<span class="t" style="left:522.7px;top:403.77px;font-size:13.5px;color:#4d4d4d;font-weight:400;">1</span>
<span class="t" style="left:562.3px;top:403.77px;font-size:13.5px;color:#4d4d4d;font-weight:400;">2</span>
<span class="t" style="left:601.4px;top:403.77px;font-size:13.5px;color:#4d4d4d;font-weight:400;">3</span>
<span class="t" style="left:640.4px;top:403.77px;font-size:13.5px;color:#4d4d4d;font-weight:400;">4</span>
<span class="t" style="left:679.5px;top:403.77px;font-size:13.5px;color:#4d4d4d;font-weight:400;">21</span>
<span class="t" style="left:709.4px;top:403.77px;font-size:13.5px;color:#4d4d4d;font-weight:400;">22</span>
<span class="t" style="left:739.4px;top:403.77px;font-size:13.5px;color:#4d4d4d;font-weight:400;">23</span>
<span class="t" style="left:768.3px;top:403.77px;font-size:13.5px;color:#4d4d4d;font-weight:400;">24</span>
<span class="t" style="left:799px;top:403.77px;font-size:13.5px;color:#4d4d4d;font-weight:400;">1</span>
<span class="t" style="left:837.6px;top:403.77px;font-size:13.5px;color:#4d4d4d;font-weight:400;letter-spacing:-0.3px">UN</span>
<span class="t" style="right:585.5px;top:404.11px;font-size:13.1px;color:#4d4d4d;font-weight:400;">150.00</span>
<span class="t" style="right:497.5px;top:404.11px;font-size:13.1px;color:#4d4d4d;font-weight:400;">150.00</span>
<span class="t" style="right:428px;top:404.11px;font-size:13.1px;color:#4d4d4d;font-weight:400;">150.00</span>
<span class="t" style="left:1113.4px;top:404.03px;font-size:13.2px;color:#4d4d4d;font-weight:400;letter-spacing:-0.9px">NEW</span>
<span class="t" style="left:1276px;top:403.94px;font-size:13.3px;color:#4d4d4d;font-weight:400;">DunstonDunstonDunston, AlecAlec...</span>
<svg style="position:absolute;left:1508px;top:400px" width="22" height="20" viewBox="1508 400 22 20"><path d="M1520.6 403.8H1514.6Q1512.8 403.8 1512.8 405.6V411.4Q1512.8 413.2 1514.6 413.2H1520.4Q1522.2 413.2 1522.2 411.4V409.6" fill="none" stroke="#444" stroke-width="1.35"/><path d="M1517.2 411.6L1517.9 409L1524.3 402.6L1526.2 404.5L1519.8 410.9Z" fill="#2a2a2a"/></svg>
<div style="left:2px;top:421px;width:1532px;height:25px;background:#eeeeee"></div>
<div style="left:2px;top:446px;width:1532px;height:1px;background:#d6d6d6"></div>
<div style="left:2px;top:427.4px;width:14px;height:14px;box-sizing:border-box;border:2px solid #b0b0b0;border-radius:2px;background:#eeeeee"></div>
<span class="t" style="left:29.1px;top:428.24px;font-size:12px;color:#383838;font-weight:700;letter-spacing:-0.3px">Provider:</span>
<span class="t" style="left:83px;top:428.24px;font-size:12px;color:#4d4d4d;font-weight:400;letter-spacing:0.12px">Dr DunstonDunstonDunston, AlecAlecAlecA...</span>
<div style="left:336px;top:421px;width:408px;height:26px;box-sizing:border-box;border:1.5px solid #74b5ec;border-radius:2px"></div>
<div style="left:485px;top:421px;width:1.2px;height:26px;background:#74b5ec"></div>
<div style="left:565px;top:421px;width:1.2px;height:26px;background:#74b5ec"></div>
<div style="left:646px;top:421px;width:1.2px;height:26px;background:#74b5ec"></div>
<div style="left:725px;top:421px;width:1.2px;height:26px;background:#74b5ec"></div>
<span class="t" style="left:339.7px;top:428.24px;font-size:12px;color:#383838;font-weight:700;letter-spacing:-0.4px">Diagnosis:</span>
<span class="t" style="left:401px;top:428.24px;font-size:12px;color:#4d4d4d;font-weight:400;">F349</span>
<svg style="position:absolute;left:729.5px;top:428.79999999999995px" width="10" height="10" viewBox="0 0 10 10"><rect x="0.5" y="0.5" width="9" height="9" rx="1.5" fill="none" stroke="#555" stroke-width="1"/><path d="M5 2.3V7.7M2.3 5H7.7" stroke="#555" stroke-width="1"/></svg>
<span class="t" style="left:746.2px;top:428.24px;font-size:12px;color:#383838;font-weight:700;letter-spacing:-0.4px">POS/SL: /</span>
<span class="t" style="left:974.8px;top:428.24px;font-size:12px;color:#383838;font-weight:700;letter-spacing:0.1px">Authorization#:</span>
<span class="t" style="left:1175.8px;top:428.24px;font-size:12px;color:#383838;font-weight:700;letter-spacing:-0.4px">Accession#:</span>
<span class="t" style="left:1246px;top:428.24px;font-size:12px;color:#4d4d4d;font-weight:400;letter-spacing:-0.05px">52e78890334566...</span>
<span class="t" style="left:1360.1px;top:428.24px;font-size:12px;color:#383838;font-weight:700;letter-spacing:-0.2px">PSTS# / Batch#:</span>
<div style="left:1509px;top:424px;width:30px;height:18px;background:#43a5f5;border-radius:4px"></div>
<div style="left:1531px;top:436px;width:1.8px;height:1.8px;background:#333;border-radius:1px"></div>
<svg style="position:absolute;left:1517.3px;top:426.3px" width="14" height="12" viewBox="0 0 14 12"><path d="M6 2.5H3Q1.2 2.5 1.2 4.3V9Q1.2 10.8 3 10.8H7.5Q9.3 10.8 9.3 9V7" fill="none" stroke="#fff" stroke-width="1.4"/><path d="M5 7.5L11.5 1M8 0.8H12.2V5" fill="none" stroke="#fff" stroke-width="1.4"/></svg>
<div style="left:30px;top:447px;width:1px;height:21px;background:#e4e4e4"></div>
<div style="left:128px;top:447px;width:1px;height:21px;background:#e4e4e4"></div>
<div style="left:226px;top:447px;width:1px;height:21px;background:#e4e4e4"></div>
<div style="left:325px;top:447px;width:1px;height:21px;background:#e4e4e4"></div>
<div style="left:389px;top:447px;width:1px;height:21px;background:#e4e4e4"></div>
<div style="left:519px;top:447px;width:1px;height:21px;background:#e4e4e4"></div>
<div style="left:559px;top:447px;width:1px;height:21px;background:#e4e4e4"></div>
<div style="left:598px;top:447px;width:1px;height:21px;background:#e4e4e4"></div>
<div style="left:638px;top:447px;width:1px;height:21px;background:#e4e4e4"></div>
<div style="left:677px;top:447px;width:1px;height:21px;background:#e4e4e4"></div>
<div style="left:707px;top:447px;width:1px;height:21px;background:#e4e4e4"></div>
<div style="left:736px;top:447px;width:1px;height:21px;background:#e4e4e4"></div>
<div style="left:766px;top:447px;width:1px;height:21px;background:#e4e4e4"></div>
<div style="left:795px;top:447px;width:1px;height:21px;background:#e4e4e4"></div>
<div style="left:834px;top:447px;width:1px;height:21px;background:#e4e4e4"></div>
<div style="left:894px;top:447px;width:1px;height:21px;background:#e4e4e4"></div>
<div style="left:953px;top:447px;width:1px;height:21px;background:#e4e4e4"></div>
<div style="left:1041px;top:447px;width:1px;height:21px;background:#e4e4e4"></div>
<div style="left:1110px;top:447px;width:1px;height:21px;background:#e4e4e4"></div>
<div style="left:1184px;top:447px;width:1px;height:21px;background:#e4e4e4"></div>
<div style="left:1273px;top:447px;width:1px;height:21px;background:#e4e4e4"></div>
<div style="left:1504px;top:447px;width:1px;height:21px;background:#e4e4e4"></div>
<div style="left:2px;top:468px;width:1532px;height:1px;background:#e4e4e4"></div>
<svg style="position:absolute;left:1px;top:450px" width="14" height="13" viewBox="0 0 14 13"><path d="M7 0.6Q7.7 0.6 8.1 1.3L13.7 11.2Q14.2 12.4 12.9 12.4H1.1Q-0.2 12.4 0.3 11.2L5.9 1.3Q6.3 0.6 7 0.6Z" fill="#d89b26"/><rect x="6.1" y="3.9" width="1.8" height="4.6" rx="0.6" fill="#fff"/><circle cx="7" cy="10.1" r="1" fill="#fff"/></svg>
<span class="t" style="right:1409.5px;top:451.77px;font-size:13.5px;color:#4a90e2;font-weight:400;">07/22/2023</span>
<span class="t" style="right:1311.5px;top:451.77px;font-size:13.5px;color:#4d4d4d;font-weight:400;">07/22/2023</span>
<span class="t" style="left:229px;top:451.77px;font-size:13.5px;color:#4d4d4d;font-weight:400;">90834</span>
<span class="t" style="left:328.4px;top:451.77px;font-size:13.5px;color:#4d4d4d;font-weight:400;">0118</span>
<span class="t" style="left:522.7px;top:451.77px;font-size:13.5px;color:#4d4d4d;font-weight:400;">1</span>
<span class="t" style="left:562.3px;top:451.77px;font-size:13.5px;color:#4d4d4d;font-weight:400;">2</span>
<span class="t" style="left:601.4px;top:451.77px;font-size:13.5px;color:#4d4d4d;font-weight:400;">3</span>
<span class="t" style="left:640.4px;top:451.77px;font-size:13.5px;color:#4d4d4d;font-weight:400;">4</span>
<span class="t" style="left:679.5px;top:451.77px;font-size:13.5px;color:#4d4d4d;font-weight:400;">21</span>
<span class="t" style="left:709.4px;top:451.77px;font-size:13.5px;color:#4d4d4d;font-weight:400;">22</span>
<span class="t" style="left:739.4px;top:451.77px;font-size:13.5px;color:#4d4d4d;font-weight:400;">23</span>
<span class="t" style="left:768.3px;top:451.77px;font-size:13.5px;color:#4d4d4d;font-weight:400;">24</span>
<span class="t" style="left:799px;top:451.77px;font-size:13.5px;color:#4d4d4d;font-weight:400;">1</span>
<span class="t" style="left:837.6px;top:451.77px;font-size:13.5px;color:#4d4d4d;font-weight:400;letter-spacing:-0.3px">UN</span>
<span class="t" style="right:585.5px;top:452.11px;font-size:13.1px;color:#4d4d4d;font-weight:400;">150.00</span>
<span class="t" style="right:497.5px;top:452.11px;font-size:13.1px;color:#4d4d4d;font-weight:400;">150.00</span>
<span class="t" style="right:428px;top:452.11px;font-size:13.1px;color:#4d4d4d;font-weight:400;">150.00</span>
<span class="t" style="left:1113.4px;top:452.03px;font-size:13.2px;color:#4d4d4d;font-weight:400;letter-spacing:-0.9px">NEW</span>
<span class="t" style="left:1276px;top:451.94px;font-size:13.3px;color:#4d4d4d;font-weight:400;">DunstonDunstonDunston, AlecAlec...</span>
<svg style="position:absolute;left:1508px;top:447px" width="22" height="20" viewBox="1508 400 22 20"><path d="M1520.6 403.8H1514.6Q1512.8 403.8 1512.8 405.6V411.4Q1512.8 413.2 1514.6 413.2H1520.4Q1522.2 413.2 1522.2 411.4V409.6" fill="none" stroke="#444" stroke-width="1.35"/><path d="M1517.2 411.6L1517.9 409L1524.3 402.6L1526.2 404.5L1519.8 410.9Z" fill="#2a2a2a"/></svg>
<div style="left:30px;top:468px;width:1px;height:21px;background:#e4e4e4"></div>
<div style="left:128px;top:468px;width:1px;height:21px;background:#e4e4e4"></div>
<div style="left:226px;top:468px;width:1px;height:21px;background:#e4e4e4"></div>
<div style="left:325px;top:468px;width:1px;height:21px;background:#e4e4e4"></div>
<div style="left:389px;top:468px;width:1px;height:21px;background:#e4e4e4"></div>
<div style="left:519px;top:468px;width:1px;height:21px;background:#e4e4e4"></div>
<div style="left:559px;top:468px;width:1px;height:21px;background:#e4e4e4"></div>
<div style="left:598px;top:468px;width:1px;height:21px;background:#e4e4e4"></div>
<div style="left:638px;top:468px;width:1px;height:21px;background:#e4e4e4"></div>
<div style="left:677px;top:468px;width:1px;height:21px;background:#e4e4e4"></div>
<div style="left:707px;top:468px;width:1px;height:21px;background:#e4e4e4"></div>
<div style="left:736px;top:468px;width:1px;height:21px;background:#e4e4e4"></div>
<div style="left:766px;top:468px;width:1px;height:21px;background:#e4e4e4"></div>
<div style="left:795px;top:468px;width:1px;height:21px;background:#e4e4e4"></div>
<div style="left:834px;top:468px;width:1px;height:21px;background:#e4e4e4"></div>
<div style="left:894px;top:468px;width:1px;height:21px;background:#e4e4e4"></div>
<div style="left:953px;top:468px;width:1px;height:21px;background:#e4e4e4"></div>
<div style="left:1041px;top:468px;width:1px;height:21px;background:#e4e4e4"></div>
<div style="left:1110px;top:468px;width:1px;height:21px;background:#e4e4e4"></div>
<div style="left:1184px;top:468px;width:1px;height:21px;background:#e4e4e4"></div>
<div style="left:1273px;top:468px;width:1px;height:21px;background:#e4e4e4"></div>
<div style="left:1504px;top:468px;width:1px;height:21px;background:#e4e4e4"></div>
<svg style="position:absolute;left:1px;top:471px" width="14" height="13" viewBox="0 0 14 13"><path d="M7 0.6Q7.7 0.6 8.1 1.3L13.7 11.2Q14.2 12.4 12.9 12.4H1.1Q-0.2 12.4 0.3 11.2L5.9 1.3Q6.3 0.6 7 0.6Z" fill="#d89b26"/><rect x="6.1" y="3.9" width="1.8" height="4.6" rx="0.6" fill="#fff"/><circle cx="7" cy="10.1" r="1" fill="#fff"/></svg>
<span class="t" style="right:1409.5px;top:471.87px;font-size:13.5px;color:#4a90e2;font-weight:400;">07/23/2023</span>
<span class="t" style="right:1311.5px;top:471.87px;font-size:13.5px;color:#4d4d4d;font-weight:400;">07/23/2023</span>
<span class="t" style="left:229px;top:471.87px;font-size:13.5px;color:#4d4d4d;font-weight:400;">0072T</span>
<span class="t" style="left:328.4px;top:471.87px;font-size:13.5px;color:#4d4d4d;font-weight:400;">0133</span>
<span class="t" style="left:522.7px;top:471.87px;font-size:13.5px;color:#4d4d4d;font-weight:400;">5</span>
<span class="t" style="left:562.3px;top:471.87px;font-size:13.5px;color:#4d4d4d;font-weight:400;">6</span>
<span class="t" style="left:601.4px;top:471.87px;font-size:13.5px;color:#4d4d4d;font-weight:400;">7</span>
<span class="t" style="left:640.4px;top:471.87px;font-size:13.5px;color:#4d4d4d;font-weight:400;"></span>
<span class="t" style="left:679.5px;top:471.87px;font-size:13.5px;color:#4d4d4d;font-weight:400;">21</span>
<span class="t" style="left:709.4px;top:471.87px;font-size:13.5px;color:#4d4d4d;font-weight:400;">22</span>
<span class="t" style="left:739.4px;top:471.87px;font-size:13.5px;color:#4d4d4d;font-weight:400;">23</span>
<span class="t" style="left:768.3px;top:471.87px;font-size:13.5px;color:#4d4d4d;font-weight:400;">24</span>
<span class="t" style="left:799px;top:471.87px;font-size:13.5px;color:#4d4d4d;font-weight:400;">1</span>
<span class="t" style="left:837.6px;top:471.87px;font-size:13.5px;color:#4d4d4d;font-weight:400;letter-spacing:-0.3px">UN</span>
<span class="t" style="right:585.5px;top:472.21px;font-size:13.1px;color:#4d4d4d;font-weight:400;">151.00</span>
<span class="t" style="right:497.5px;top:472.21px;font-size:13.1px;color:#4d4d4d;font-weight:400;">151.00</span>
<span class="t" style="right:428px;top:472.21px;font-size:13.1px;color:#4d4d4d;font-weight:400;">151.00</span>
<span class="t" style="left:1113.4px;top:472.13px;font-size:13.2px;color:#4d4d4d;font-weight:400;letter-spacing:-0.9px">NEW</span>
<span class="t" style="left:1276px;top:472.04px;font-size:13.3px;color:#4d4d4d;font-weight:400;">DunstonDunstonDunston, AlecAlec...</span>
<svg style="position:absolute;left:1508px;top:468px" width="22" height="20" viewBox="1508 400 22 20"><path d="M1520.6 403.8H1514.6Q1512.8 403.8 1512.8 405.6V411.4Q1512.8 413.2 1514.6 413.2H1520.4Q1522.2 413.2 1522.2 411.4V409.6" fill="none" stroke="#444" stroke-width="1.35"/><path d="M1517.2 411.6L1517.9 409L1524.3 402.6L1526.2 404.5L1519.8 410.9Z" fill="#2a2a2a"/></svg>
<div style="left:2px;top:488px;width:1532px;height:26px;background:#eeeeee"></div>
<div style="left:2px;top:514px;width:1532px;height:1px;background:#d6d6d6"></div>
<div style="left:2px;top:495.2px;width:14px;height:14px;box-sizing:border-box;border:2px solid #b0b0b0;border-radius:2px;background:#eeeeee"></div>
<span class="t" style="left:29.1px;top:496.04px;font-size:12px;color:#383838;font-weight:700;letter-spacing:-0.3px">Provider:</span>
<span class="t" style="left:83px;top:496.04px;font-size:12px;color:#4d4d4d;font-weight:400;letter-spacing:0.12px">Dr DunstonDunstonDunston, AlecAlecAlecA...</span>
<div style="left:336px;top:488px;width:408px;height:27px;box-sizing:border-box;border:1.5px solid #74b5ec;border-radius:2px"></div>
<div style="left:485px;top:488px;width:1.2px;height:27px;background:#74b5ec"></div>
<div style="left:565px;top:488px;width:1.2px;height:27px;background:#74b5ec"></div>
<div style="left:646px;top:488px;width:1.2px;height:27px;background:#74b5ec"></div>
<div style="left:725px;top:488px;width:1.2px;height:27px;background:#74b5ec"></div>
<span class="t" style="left:339.7px;top:496.04px;font-size:12px;color:#383838;font-weight:700;letter-spacing:-0.4px">Diagnosis:</span>
<span class="t" style="left:401px;top:496.04px;font-size:12px;color:#4d4d4d;font-weight:400;">F349</span>
<svg style="position:absolute;left:729.5px;top:496.59999999999997px" width="10" height="10" viewBox="0 0 10 10"><rect x="0.5" y="0.5" width="9" height="9" rx="1.5" fill="none" stroke="#555" stroke-width="1"/><path d="M5 2.3V7.7M2.3 5H7.7" stroke="#555" stroke-width="1"/></svg>
<span class="t" style="left:746.2px;top:496.04px;font-size:12px;color:#383838;font-weight:700;letter-spacing:-0.4px">POS/SL: /</span>
<span class="t" style="left:974.8px;top:496.04px;font-size:12px;color:#383838;font-weight:700;letter-spacing:0.1px">Authorization#:</span>
<span class="t" style="left:1175.8px;top:496.04px;font-size:12px;color:#383838;font-weight:700;letter-spacing:-0.4px">Accession#:</span>
<span class="t" style="left:1246px;top:496.04px;font-size:12px;color:#4d4d4d;font-weight:400;letter-spacing:-0.05px">52e78996662022...</span>
<span class="t" style="left:1360.1px;top:496.04px;font-size:12px;color:#383838;font-weight:700;letter-spacing:-0.2px">PSTS# / Batch#:</span>
<div style="left:1509px;top:491px;width:30px;height:18px;background:#43a5f5;border-radius:4px"></div>
<div style="left:1531px;top:503px;width:1.8px;height:1.8px;background:#333;border-radius:1px"></div>
<svg style="position:absolute;left:1517.3px;top:493.3px" width="14" height="12" viewBox="0 0 14 12"><path d="M6 2.5H3Q1.2 2.5 1.2 4.3V9Q1.2 10.8 3 10.8H7.5Q9.3 10.8 9.3 9V7" fill="none" stroke="#fff" stroke-width="1.4"/><path d="M5 7.5L11.5 1M8 0.8H12.2V5" fill="none" stroke="#fff" stroke-width="1.4"/></svg>
<div style="left:30px;top:515px;width:1px;height:21px;background:#e4e4e4"></div>
<div style="left:128px;top:515px;width:1px;height:21px;background:#e4e4e4"></div>
<div style="left:226px;top:515px;width:1px;height:21px;background:#e4e4e4"></div>
<div style="left:325px;top:515px;width:1px;height:21px;background:#e4e4e4"></div>
<div style="left:389px;top:515px;width:1px;height:21px;background:#e4e4e4"></div>
<div style="left:519px;top:515px;width:1px;height:21px;background:#e4e4e4"></div>
<div style="left:559px;top:515px;width:1px;height:21px;background:#e4e4e4"></div>
<div style="left:598px;top:515px;width:1px;height:21px;background:#e4e4e4"></div>
<div style="left:638px;top:515px;width:1px;height:21px;background:#e4e4e4"></div>
<div style="left:677px;top:515px;width:1px;height:21px;background:#e4e4e4"></div>
<div style="left:707px;top:515px;width:1px;height:21px;background:#e4e4e4"></div>
<div style="left:736px;top:515px;width:1px;height:21px;background:#e4e4e4"></div>
<div style="left:766px;top:515px;width:1px;height:21px;background:#e4e4e4"></div>
<div style="left:795px;top:515px;width:1px;height:21px;background:#e4e4e4"></div>
<div style="left:834px;top:515px;width:1px;height:21px;background:#e4e4e4"></div>
<div style="left:894px;top:515px;width:1px;height:21px;background:#e4e4e4"></div>
<div style="left:953px;top:515px;width:1px;height:21px;background:#e4e4e4"></div>
<div style="left:1041px;top:515px;width:1px;height:21px;background:#e4e4e4"></div>
<div style="left:1110px;top:515px;width:1px;height:21px;background:#e4e4e4"></div>
<div style="left:1184px;top:515px;width:1px;height:21px;background:#e4e4e4"></div>
<div style="left:1273px;top:515px;width:1px;height:21px;background:#e4e4e4"></div>
<div style="left:1504px;top:515px;width:1px;height:21px;background:#e4e4e4"></div>
<span class="t" style="right:1409.5px;top:519.37px;font-size:13.5px;color:#4a90e2;font-weight:400;">07/25/2023</span>
<span class="t" style="right:1311.5px;top:519.37px;font-size:13.5px;color:#4d4d4d;font-weight:400;">07/25/2023</span>
<span class="t" style="left:229px;top:519.37px;font-size:13.5px;color:#4d4d4d;font-weight:400;">0072T</span>
<span class="t" style="left:328.4px;top:519.37px;font-size:13.5px;color:#4d4d4d;font-weight:400;">0133</span>
<span class="t" style="left:522.7px;top:519.37px;font-size:13.5px;color:#4d4d4d;font-weight:400;">5</span>
<span class="t" style="left:562.3px;top:519.37px;font-size:13.5px;color:#4d4d4d;font-weight:400;">6</span>
<span class="t" style="left:601.4px;top:519.37px;font-size:13.5px;color:#4d4d4d;font-weight:400;">7</span>
<span class="t" style="left:640.4px;top:519.37px;font-size:13.5px;color:#4d4d4d;font-weight:400;"></span>
<span class="t" style="left:679.5px;top:519.37px;font-size:13.5px;color:#4d4d4d;font-weight:400;">21</span>
<span class="t" style="left:709.4px;top:519.37px;font-size:13.5px;color:#4d4d4d;font-weight:400;">22</span>
<span class="t" style="left:739.4px;top:519.37px;font-size:13.5px;color:#4d4d4d;font-weight:400;">23</span>
<span class="t" style="left:768.3px;top:519.37px;font-size:13.5px;color:#4d4d4d;font-weight:400;">24</span>
<span class="t" style="left:799px;top:519.37px;font-size:13.5px;color:#4d4d4d;font-weight:400;">1</span>
<span class="t" style="left:837.6px;top:519.37px;font-size:13.5px;color:#4d4d4d;font-weight:400;letter-spacing:-0.3px">UN</span>
<span class="t" style="right:585.5px;top:519.71px;font-size:13.1px;color:#4d4d4d;font-weight:400;">151.00</span>
<span class="t" style="right:497.5px;top:519.71px;font-size:13.1px;color:#4d4d4d;font-weight:400;">151.00</span>
<span class="t" style="right:428px;top:519.71px;font-size:13.1px;color:#4d4d4d;font-weight:400;">151.00</span>
<span class="t" style="left:1113.4px;top:519.63px;font-size:13.2px;color:#4d4d4d;font-weight:400;letter-spacing:-0.9px">NEW</span>
<span class="t" style="left:1276px;top:519.54px;font-size:13.3px;color:#4d4d4d;font-weight:400;">DunstonDunstonDunston, AlecAlec...</span>
<svg style="position:absolute;left:1508px;top:515px" width="22" height="20" viewBox="1508 400 22 20"><path d="M1520.6 403.8H1514.6Q1512.8 403.8 1512.8 405.6V411.4Q1512.8 413.2 1514.6 413.2H1520.4Q1522.2 413.2 1522.2 411.4V409.6" fill="none" stroke="#444" stroke-width="1.35"/><path d="M1517.2 411.6L1517.9 409L1524.3 402.6L1526.2 404.5L1519.8 410.9Z" fill="#2a2a2a"/></svg>
<div style="left:2px;top:536px;width:1532px;height:25px;background:#eeeeee"></div>
<div style="left:2px;top:561px;width:1532px;height:1px;background:#d6d6d6"></div>
<div style="left:2px;top:542.9px;width:14px;height:14px;box-sizing:border-box;border:2px solid #b0b0b0;border-radius:2px;background:#eeeeee"></div>
<span class="t" style="left:29.1px;top:543.74px;font-size:12px;color:#383838;font-weight:700;letter-spacing:-0.3px">Provider:</span>
<span class="t" style="left:83px;top:543.74px;font-size:12px;color:#4d4d4d;font-weight:400;letter-spacing:0.12px">Dr DunstonDunstonDunston, AlecAlecAlecA...</span>
<div style="left:336px;top:536px;width:408px;height:26px;box-sizing:border-box;border:1.5px solid #74b5ec;border-radius:2px"></div>
<div style="left:485px;top:536px;width:1.2px;height:26px;background:#74b5ec"></div>
<div style="left:565px;top:536px;width:1.2px;height:26px;background:#74b5ec"></div>
<div style="left:646px;top:536px;width:1.2px;height:26px;background:#74b5ec"></div>
<div style="left:725px;top:536px;width:1.2px;height:26px;background:#74b5ec"></div>
<span class="t" style="left:339.7px;top:543.74px;font-size:12px;color:#383838;font-weight:700;letter-spacing:-0.4px">Diagnosis:</span>
<span class="t" style="left:401px;top:543.74px;font-size:12px;color:#4d4d4d;font-weight:400;">F349</span>
<svg style="position:absolute;left:729.5px;top:544.3px" width="10" height="10" viewBox="0 0 10 10"><rect x="0.5" y="0.5" width="9" height="9" rx="1.5" fill="none" stroke="#555" stroke-width="1"/><path d="M5 2.3V7.7M2.3 5H7.7" stroke="#555" stroke-width="1"/></svg>
<span class="t" style="left:746.2px;top:543.74px;font-size:12px;color:#383838;font-weight:700;letter-spacing:-0.4px">POS/SL: /</span>
<span class="t" style="left:974.8px;top:543.74px;font-size:12px;color:#383838;font-weight:700;letter-spacing:0.1px">Authorization#:</span>
<span class="t" style="left:1175.8px;top:543.74px;font-size:12px;color:#383838;font-weight:700;letter-spacing:-0.4px">Accession#:</span>
<span class="t" style="left:1246px;top:543.74px;font-size:12px;color:#4d4d4d;font-weight:400;letter-spacing:-0.05px">52ecfrsd6620224...</span>
<span class="t" style="left:1360.1px;top:543.74px;font-size:12px;color:#383838;font-weight:700;letter-spacing:-0.2px">PSTS# / Batch#:</span>
<div style="left:1509px;top:539px;width:30px;height:18px;background:#43a5f5;border-radius:4px"></div>
<div style="left:1531px;top:551px;width:1.8px;height:1.8px;background:#333;border-radius:1px"></div>
<svg style="position:absolute;left:1517.3px;top:541.3px" width="14" height="12" viewBox="0 0 14 12"><path d="M6 2.5H3Q1.2 2.5 1.2 4.3V9Q1.2 10.8 3 10.8H7.5Q9.3 10.8 9.3 9V7" fill="none" stroke="#fff" stroke-width="1.4"/><path d="M5 7.5L11.5 1M8 0.8H12.2V5" fill="none" stroke="#fff" stroke-width="1.4"/></svg>
<div style="left:30px;top:562px;width:1px;height:21px;background:#e4e4e4"></div>
<div style="left:128px;top:562px;width:1px;height:21px;background:#e4e4e4"></div>
<div style="left:226px;top:562px;width:1px;height:21px;background:#e4e4e4"></div>
<div style="left:325px;top:562px;width:1px;height:21px;background:#e4e4e4"></div>
<div style="left:389px;top:562px;width:1px;height:21px;background:#e4e4e4"></div>
<div style="left:519px;top:562px;width:1px;height:21px;background:#e4e4e4"></div>
<div style="left:559px;top:562px;width:1px;height:21px;background:#e4e4e4"></div>
<div style="left:598px;top:562px;width:1px;height:21px;background:#e4e4e4"></div>
<div style="left:638px;top:562px;width:1px;height:21px;background:#e4e4e4"></div>
<div style="left:677px;top:562px;width:1px;height:21px;background:#e4e4e4"></div>
<div style="left:707px;top:562px;width:1px;height:21px;background:#e4e4e4"></div>
<div style="left:736px;top:562px;width:1px;height:21px;background:#e4e4e4"></div>
<div style="left:766px;top:562px;width:1px;height:21px;background:#e4e4e4"></div>
<div style="left:795px;top:562px;width:1px;height:21px;background:#e4e4e4"></div>
<div style="left:834px;top:562px;width:1px;height:21px;background:#e4e4e4"></div>
<div style="left:894px;top:562px;width:1px;height:21px;background:#e4e4e4"></div>
<div style="left:953px;top:562px;width:1px;height:21px;background:#e4e4e4"></div>
<div style="left:1041px;top:562px;width:1px;height:21px;background:#e4e4e4"></div>
<div style="left:1110px;top:562px;width:1px;height:21px;background:#e4e4e4"></div>
<div style="left:1184px;top:562px;width:1px;height:21px;background:#e4e4e4"></div>
<div style="left:1273px;top:562px;width:1px;height:21px;background:#e4e4e4"></div>
<div style="left:1504px;top:562px;width:1px;height:21px;background:#e4e4e4"></div>
<span class="t" style="right:1409.5px;top:566.07px;font-size:13.5px;color:#4a90e2;font-weight:400;">07/26/2023</span>
<span class="t" style="right:1311.5px;top:566.07px;font-size:13.5px;color:#4d4d4d;font-weight:400;">07/26/2023</span>
<span class="t" style="left:229px;top:566.07px;font-size:13.5px;color:#4d4d4d;font-weight:400;">90834</span>
<span class="t" style="left:328.4px;top:566.07px;font-size:13.5px;color:#4d4d4d;font-weight:400;">0118</span>
<span class="t" style="left:522.7px;top:566.07px;font-size:13.5px;color:#4d4d4d;font-weight:400;">1</span>
<span class="t" style="left:562.3px;top:566.07px;font-size:13.5px;color:#4d4d4d;font-weight:400;">2</span>
<span class="t" style="left:601.4px;top:566.07px;font-size:13.5px;color:#4d4d4d;font-weight:400;">3</span>
<span class="t" style="left:640.4px;top:566.07px;font-size:13.5px;color:#4d4d4d;font-weight:400;">4</span>
<span class="t" style="left:679.5px;top:566.07px;font-size:13.5px;color:#4d4d4d;font-weight:400;">21</span>
<span class="t" style="left:709.4px;top:566.07px;font-size:13.5px;color:#4d4d4d;font-weight:400;">22</span>
<span class="t" style="left:739.4px;top:566.07px;font-size:13.5px;color:#4d4d4d;font-weight:400;">23</span>
<span class="t" style="left:768.3px;top:566.07px;font-size:13.5px;color:#4d4d4d;font-weight:400;">24</span>
<span class="t" style="left:799px;top:566.07px;font-size:13.5px;color:#4d4d4d;font-weight:400;">1</span>
<span class="t" style="left:837.6px;top:566.07px;font-size:13.5px;color:#4d4d4d;font-weight:400;letter-spacing:-0.3px">UN</span>
<span class="t" style="right:585.5px;top:566.41px;font-size:13.1px;color:#4d4d4d;font-weight:400;">150.00</span>
<span class="t" style="right:497.5px;top:566.41px;font-size:13.1px;color:#4d4d4d;font-weight:400;">150.00</span>
<span class="t" style="right:428px;top:566.41px;font-size:13.1px;color:#4d4d4d;font-weight:400;">150.00</span>
<span class="t" style="left:1113.4px;top:566.33px;font-size:13.2px;color:#4d4d4d;font-weight:400;letter-spacing:-0.9px">NEW</span>
<span class="t" style="left:1276px;top:566.24px;font-size:13.3px;color:#4d4d4d;font-weight:400;">DunstonDunstonDunston, AlecAlec...</span>
<svg style="position:absolute;left:1508px;top:562px" width="22" height="20" viewBox="1508 400 22 20"><path d="M1520.6 403.8H1514.6Q1512.8 403.8 1512.8 405.6V411.4Q1512.8 413.2 1514.6 413.2H1520.4Q1522.2 413.2 1522.2 411.4V409.6" fill="none" stroke="#444" stroke-width="1.35"/><path d="M1517.2 411.6L1517.9 409L1524.3 402.6L1526.2 404.5L1519.8 410.9Z" fill="#2a2a2a"/></svg>
<div style="left:0px;top:1px;width:2px;height:583px;background:#a8a8a8"></div>
<div style="left:1534px;top:2px;width:2px;height:582px;background:#a8a8a8"></div>
<div style="left:0px;top:582px;width:1536px;height:2px;background:#a8a8a8"></div>
</body></html>
